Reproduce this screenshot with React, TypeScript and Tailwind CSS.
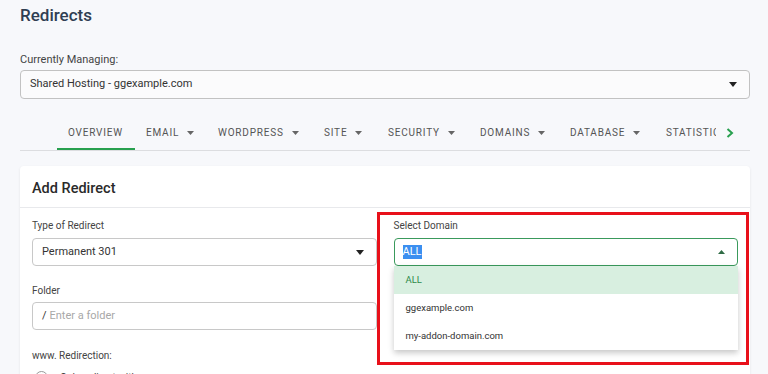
import React from "react"

const tabs = [
  { label: "Overview", w: "w-[78px]", active: true, menu: false },
  { label: "Email", w: "w-[72px]", menu: true },
  { label: "WordPress", w: "w-[106px]", menu: true },
  { label: "Site", w: "w-[64px]", menu: true },
  { label: "Security", w: "w-[92px]", menu: true },
  { label: "Domains", w: "w-[90px]", menu: true },
  { label: "Database", w: "w-[96px]", menu: true },
  { label: "Statistics", w: "w-[100px]", menu: false },
]

function Caret({ up = false, small = false, className = "" }: { up?: boolean; small?: boolean; className?: string }) {
  const w = small ? 7 : 8
  const h = small ? 4 : 5
  return (
    <svg width={w} height={h} viewBox={`0 0 ${w} ${h}`} className={className}>
      {up ? (
        <polygon points={`0,${h} ${w},${h} ${w / 2},0`} fill="currentColor" />
      ) : (
        <polygon points={`0,0 ${w},0 ${w / 2},${h}`} fill="currentColor" />
      )}
    </svg>
  )
}

export default function App() {
  return (
    <div className="w-[768px] h-[374px] overflow-hidden bg-[#f7f8fb] font-['Roboto',sans-serif] text-[#333]">
      <div className="pl-5 pr-[18px]">
        {/* Page title */}
        <h1 className="pt-[3px] text-[17px] leading-6 font-medium text-[#2f3e52]">Redirects</h1>

        {/* Account picker */}
        <div className="mt-[25px] text-[11px] leading-4 text-[#444]">Currently Managing:</div>
        <div className="mt-[2px] h-[29px] flex items-center justify-between rounded border border-[#c2c2c2] bg-[#fbfbfc] pl-[9px] pr-[12px]">
          <span className="text-[11px] text-[#333]">Shared Hosting - ggexample.com</span>
          <Caret className="text-[#222]" />
        </div>

        {/* Tabs */}
        <div className="mt-[15px] flex items-stretch border-b border-[#dcdde0] pl-[37px] h-[37px]">
          <div className="flex flex-1 overflow-hidden">
            {tabs.map((t) => (
              <div
                key={t.label}
                className={`${t.w} shrink-0 flex items-center gap-[8px] pl-[11px] pt-[3px] text-[10px] uppercase tracking-[0.8px] text-[#555] border-b-2 ${
                  t.active ? "border-[#28a04f]" : "border-transparent"
                }`}
              >
                <span className="w-max">{t.label}</span>
                {t.menu && <Caret small className="text-[#666]" />}
              </div>
            ))}
          </div>
          <div className="w-[34px] shrink-0 flex items-center justify-start pl-[10px] pt-[2px]">
            <svg width="8" height="10" viewBox="0 0 8 10" fill="none">
              <path d="M1.5 1 L6 5 L1.5 9" stroke="#28a04f" strokeWidth="2" />
            </svg>
          </div>
        </div>

        {/* Card */}
        <div className="relative mt-[15px] rounded bg-white shadow-[0_1px_3px_rgba(0,0,0,0.08)]">
          <div className="h-[42px] flex items-center px-3 pt-[5px] border-b border-[#e8e9ec]">
            <h2 className="text-[14.5px] font-medium text-[#2a2a2a]">Add Redirect</h2>
          </div>
          <div className="px-3 pt-[10px] grid grid-cols-2 gap-x-[17px]">
            <div>
              <div className="text-[10px] leading-4 text-[#444]">Type of Redirect</div>
              <div className="mt-[4px] h-[28px] flex items-center justify-between rounded border border-[#c8c8c8] pl-[9px] pr-[12px]">
                <span className="text-[11px] text-[#333]">Permanent 301</span>
                <Caret className="text-[#222]" />
              </div>
              <div className="mt-[17px] text-[10px] leading-4 text-[#444]">Folder</div>
              <div className="mt-[3px] h-[28px] flex items-center rounded border border-[#c8c8c8] pl-[9px]">
                <span className="text-[11px] text-[#333]">/</span>
                <span className="ml-[3px] text-[11px] text-[#a8a8a8]">Enter a folder</span>
              </div>
              <div className="mt-[18px] text-[10px] leading-4 text-[#444]">www. Redirection:</div>
              <div className="mt-[6px] flex items-center gap-[12px] pl-[3px]">
                <span className="w-[13px] h-[13px] rounded-full border border-[#999] bg-white" />
                <span className="text-[10px] text-[#444]">Only redirect with www.</span>
              </div>
            </div>

            <div className="relative">
              <div className="text-[10px] leading-4 text-[#444]">Select Domain</div>
              <div className="mt-[4px] h-[28px] flex items-center justify-between rounded border border-[#3a9a5c] pl-[8px] pr-[12px]">
                <span className="text-[11px] leading-[14px] bg-[#3b8ff0] text-white">ALL</span>
                <Caret up small className="text-[#2f6b45]" />
              </div>
              {/* Open dropdown list */}
              <div className="absolute left-0 right-0 top-[48px] z-10 bg-white shadow-[0_3px_6px_rgba(0,0,0,0.22)]">
                <div className="h-[28px] flex items-center px-[12px] bg-[#d8efe0] text-[9.5px] text-[#2e8a4b]">ALL</div>
                <div className="h-[28px] flex items-center px-[12px] text-[9.5px] text-[#333]">ggexample.com</div>
                <div className="h-[28px] flex items-center px-[12px] text-[9.5px] text-[#333]">my-addon-domain.com</div>
              </div>
            </div>
          </div>

          {/* Highlight annotation */}
          <div className="absolute left-[357px] top-[46px] w-[372px] h-[153px] border-[3px] border-[#e8101a] z-20 pointer-events-none" />
        </div>
      </div>
    </div>
  )
}
